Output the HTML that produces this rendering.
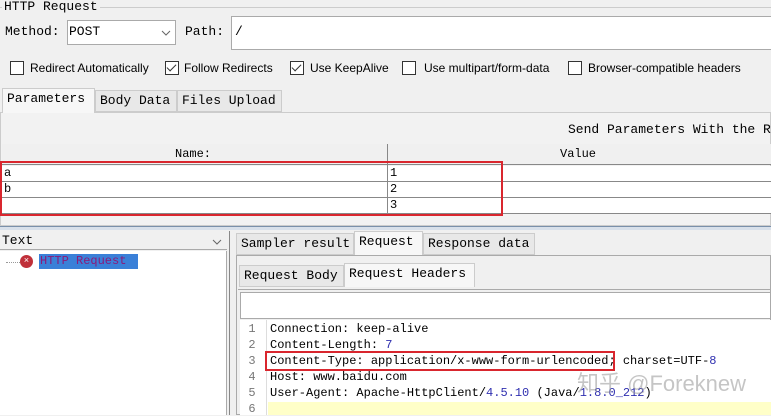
<!DOCTYPE html>
<html><head><meta charset="utf-8"><style>
body{margin:0;width:771px;height:415px;overflow:hidden;background:#f0f0f0;position:relative;font-family:"Liberation Mono","Noto Sans CJK SC",monospace;font-size:13px;color:#000}
div,span{position:absolute;box-sizing:border-box;white-space:nowrap}
.s{font-family:"Liberation Sans",sans-serif;font-size:12px}
.cb{width:14px;height:14px;border:1px solid #333;background:#fff}
.ck::after{content:"";position:absolute;left:3px;top:0px;width:4px;height:8px;border:solid #333;border-width:0 1.5px 1.5px 0;transform:rotate(45deg)}
.tab{border:1px solid #ccc;background:#e8e8e8;padding:2px 4px;height:24px}
.sel{background:#f7f7f7;border-bottom:none}
.ln{left:245px;color:#777;width:14px;text-align:center;font-size:12px}
.code{left:270px;font-size:12px}
</style></head><body>
<div style="left:0;top:7px;width:771px;height:1px;background:#ccc"></div>
<span style="left:2px;top:-1px;background:#f0f0f0;padding:0 2px">HTTP Request</span>
<span style="left:5px;top:24px">Method:</span>
<div style="left:67px;top:20px;width:109px;height:25px;background:#fff;border:1px solid #aaa"></div>
<span style="left:69px;top:24px">POST</span>
<svg style="position:absolute;left:161px;top:30px" width="10" height="6"><path d="M1 1L5 5L9 1" fill="none" stroke="#666" stroke-width="1"/></svg>
<span style="left:185px;top:24px">Path:</span>
<div style="left:231px;top:16px;width:545px;height:34px;background:#fff;border:1px solid #aaa"></div>
<span style="left:235px;top:24px">/</span>
<div class="cb" style="left:10px;top:61px"></div><span class="s" style="left:30px;top:61px">Redirect Automatically</span>
<div class="cb ck" style="left:165px;top:61px"></div><span class="s" style="left:184px;top:61px">Follow Redirects</span>
<div class="cb ck" style="left:290px;top:61px"></div><span class="s" style="left:310px;top:61px">Use KeepAlive</span>
<div class="cb" style="left:402px;top:61px"></div><span class="s" style="left:424px;top:61px">Use multipart/form-data</span>
<div class="cb" style="left:568px;top:61px"></div><span class="s" style="left:588px;top:61px">Browser-compatible headers</span>
<div style="left:0;top:112px;width:771px;height:114px;border:1px solid #ccc;background:#f2f2f2"></div>
<div class="tab sel" style="left:2px;top:88px;width:93px;height:25px">Parameters</div>
<div class="tab" style="left:95px;top:90px;width:82px;height:22px">Body Data</div>
<div class="tab" style="left:177px;top:90px;width:105px;height:22px">Files Upload</div>
<span style="left:568px;top:122px">Send Parameters With the R</span>
<div style="left:2px;top:144px;width:769px;height:21px;border-bottom:1px solid #888;background:#f0f0f0"></div>
<div style="left:387px;top:144px;width:1px;height:70px;background:#888"></div>
<span style="left:175px;top:147px;font-size:12px">Name:</span>
<span style="left:560px;top:147px;font-size:12px">Value</span>
<div style="left:2px;top:166px;width:769px;height:48px;background:#fff"></div>
<div style="left:2px;top:181px;width:769px;height:1px;background:#888"></div>
<div style="left:2px;top:197px;width:769px;height:1px;background:#888"></div>
<div style="left:2px;top:213px;width:769px;height:1px;background:#888"></div>
<div style="left:387px;top:166px;width:1px;height:48px;background:#888"></div>
<span style="left:4px;top:166px;font-size:12px">a</span><span style="left:390px;top:166px;font-size:12px">1</span>
<span style="left:4px;top:182px;font-size:12px">b</span><span style="left:390px;top:182px;font-size:12px">2</span>
<span style="left:390px;top:198px;font-size:12px">3</span>
<div style="left:0;top:161px;width:503px;height:55px;border:2px solid #d9262e"></div>
<div style="left:0;top:226px;width:771px;height:4px;background:#d8e0ea;border-top:1px solid #7a90aa"></div>
<div style="left:0;top:231px;width:227px;height:19px;background:#f0f0f0;border-bottom:1px solid #aaa"></div>
<span style="left:2px;top:233px">Text</span>
<svg style="position:absolute;left:212px;top:239px" width="10" height="6"><path d="M1 1L5 5L9 1" fill="none" stroke="#666" stroke-width="1"/></svg>
<div style="left:0;top:251px;width:227px;height:164px;background:#fff;border-right:1px solid #aaa"></div>
<div style="left:6px;top:262px;width:14px;border-top:1px dotted #999"></div>
<div style="left:20px;top:255px;width:13px;height:13px;border-radius:50%;background:#c0303a;color:#fff;font-size:9px;text-align:center;line-height:13px">&#215;</div>
<div style="left:39px;top:254px;width:99px;height:15px;background:#3a80d8"></div>
<span style="left:40px;top:254px;color:#8a1a7a;font-size:12px">HTTP Request</span>
<div style="left:229px;top:231px;width:1px;height:184px;background:#888"></div>
<div class="tab" style="left:236px;top:233px;width:118px;height:22px">Sampler result</div>
<div class="tab sel" style="left:354px;top:231px;width:69px;height:24px">Request</div>
<div class="tab" style="left:423px;top:233px;width:112px;height:22px">Response data</div>
<div style="left:236px;top:255px;width:535px;height:160px;border:1px solid #aaa;background:#f0f0f0"></div>
<div class="tab" style="left:239px;top:265px;width:105px;height:22px">Request Body</div>
<div class="tab sel" style="left:344px;top:263px;width:131px;height:24px">Request Headers</div>
<div style="left:238px;top:289px;width:533px;height:1px;background:#aaa"></div>
<div style="left:240px;top:292px;width:531px;height:27px;background:#fff;border:1px solid #aaa"></div>
<div style="left:240px;top:320px;width:531px;height:95px;background:#fff"></div>
<div style="left:266px;top:320px;width:1px;height:95px;background:#ddd"></div>
<div style="left:268px;top:402px;width:503px;height:13px;background:#ffffc8"></div>
<span class="ln" style="top:322px">1</span><span class="ln" style="top:338px">2</span><span class="ln" style="top:354px">3</span><span class="ln" style="top:370px">4</span><span class="ln" style="top:386px">5</span><span class="ln" style="top:402px">6</span>
<span class="code" style="top:322px">Connection: keep-alive</span>
<span class="code" style="top:338px">Content-Length: <span style="position:static;color:#3030b0">7</span></span>
<span class="code" style="top:354px">Content-Type: application/x-www-form-urlencoded; charset=UTF-<span style="position:static;color:#3030b0">8</span></span>
<span class="code" style="top:370px">Host: www.baidu.com</span>
<span class="code" style="top:386px">User-Agent: Apache-HttpClient/<span style="position:static;color:#3030b0">4.5.10</span> (Java/<span style="position:static;color:#3030b0">1.8.0_212</span>)</span>
<div style="left:265px;top:351px;width:350px;height:20px;border:2px solid #d9262e"></div>
<span style="left:577px;top:366px;font-family:'Liberation Sans','Noto Sans CJK SC',sans-serif;font-size:22px;color:rgba(150,150,150,0.55)">知乎 @Foreknew</span>
</body></html>
